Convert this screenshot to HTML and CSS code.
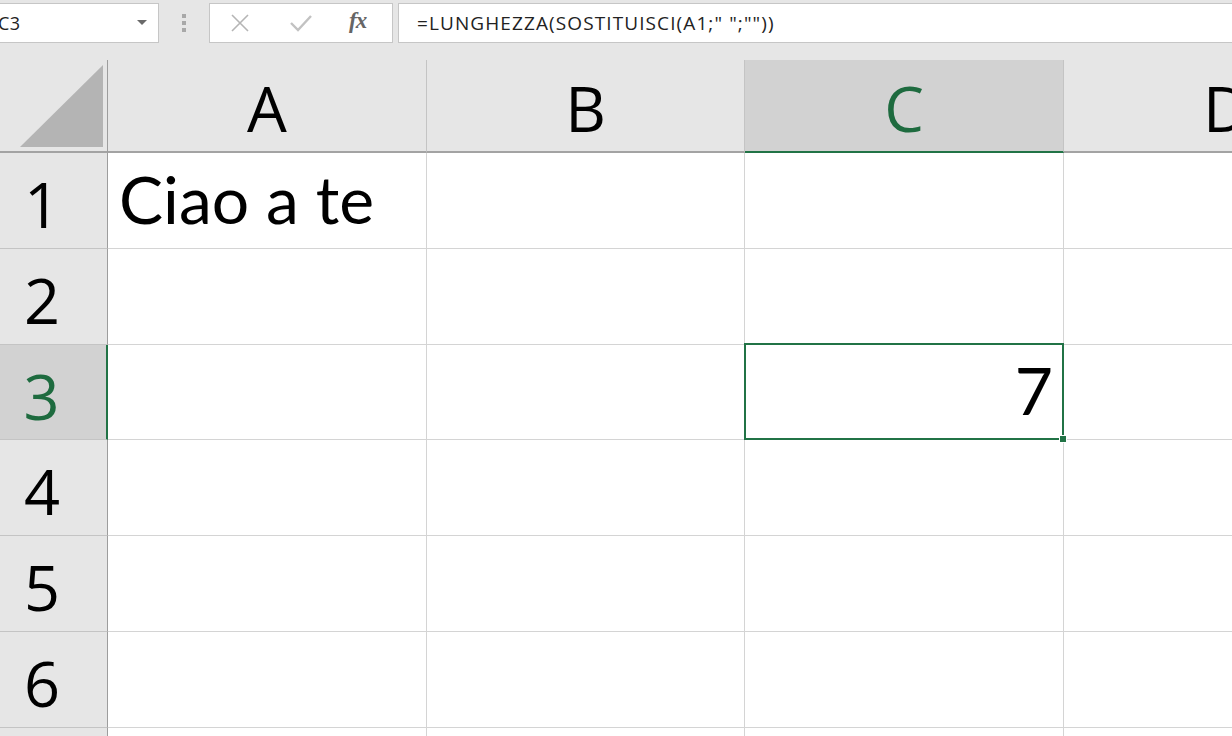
FILE: index.html
```html
<!DOCTYPE html>
<html lang="it">
<head>
<meta charset="utf-8">
<title>Excel</title>
<link rel="stylesheet" href="styles.css">
</head>
<body>
<div class="app">
  <div class="toolbar">
    <div class="namebox">
      <span class="namebox-text">C3</span>
      <svg class="dropdown" width="10" height="6" viewBox="0 0 10 6"><path d="M0 0 H10 L5 5 Z" fill="#6a6a6a"/></svg>
    </div>
    <div class="dots">
      <span class="dot"></span><span class="dot"></span><span class="dot"></span>
    </div>
    <div class="fxbox">
      <svg class="icon" width="20" height="20" viewBox="0 0 20 20"><path d="M2 2 L18 18 M18 2 L2 18" stroke="#b5b5b5" stroke-width="1.6" fill="none"/></svg>
      <svg class="icon" width="24" height="20" viewBox="0 0 24 20"><path d="M2 10 L9 17 L22 3" stroke="#c2c2c2" stroke-width="2.4" fill="none"/></svg>
      <span class="fx">fx</span>
    </div>
    <div class="formula">=LUNGHEZZA(SOSTITUISCI(A1;" ";""))</div>
  </div>

  <div class="sheet">
    <div class="corner"><span class="corner-tri"></span></div>
    <div class="colhead">A</div>
    <div class="colhead">B</div>
    <div class="colhead colhead-active">C</div>
    <div class="colhead colhead-last">D</div>

    <div class="rowhead">1</div>
    <div class="cell cell-text">Ciao a te</div>
    <div class="cell"></div>
    <div class="cell"></div>
    <div class="cell"></div>

    <div class="rowhead">2</div>
    <div class="cell"></div>
    <div class="cell"></div>
    <div class="cell"></div>
    <div class="cell"></div>

    <div class="rowhead rowhead-active">3</div>
    <div class="cell"></div>
    <div class="cell"></div>
    <div class="cell cell-num cell-selected">7<span class="fill-handle"></span></div>
    <div class="cell"></div>

    <div class="rowhead">4</div>
    <div class="cell"></div>
    <div class="cell"></div>
    <div class="cell"></div>
    <div class="cell"></div>

    <div class="rowhead">5</div>
    <div class="cell"></div>
    <div class="cell"></div>
    <div class="cell"></div>
    <div class="cell"></div>

    <div class="rowhead">6</div>
    <div class="cell"></div>
    <div class="cell"></div>
    <div class="cell"></div>
    <div class="cell"></div>

    <div class="rowhead rowhead-clip"></div>
    <div class="cell"></div>
    <div class="cell"></div>
    <div class="cell"></div>
    <div class="cell"></div>
  </div>
</div>
</body>
</html>
```
FILE: styles.css
```css
* { box-sizing: border-box; }
html, body {
  margin: 0;
  padding: 0;
  width: 1232px;
  height: 736px;
  overflow: hidden;
  background: #e6e6e6;
}
.app {
  font-family: "Open Sans", "Noto Sans", sans-serif;
  color: #000;
}
.toolbar {
  height: 60px;
  display: flex;
  align-items: flex-start;
  padding-top: 3px;
  background: #e6e6e6;
}
.namebox {
  width: 159px;
  height: 40px;
  background: #fff;
  border: 1px solid #c6c6c6;
  border-left: none;
  display: flex;
  align-items: center;
  justify-content: space-between;
  padding-right: 11px;
  flex-shrink: 0;
}
.namebox-text {
  font-size: 18px;
  color: #222;
  margin-left: -2px;
  letter-spacing: 0.3px;
}
.dropdown { display: block; }
.dots {
  width: 50px;
  height: 40px;
  display: flex;
  flex-direction: column;
  align-items: center;
  justify-content: center;
  gap: 3px;
  flex-shrink: 0;
}
.dot {
  width: 4px;
  height: 4px;
  background: #a8a8a8;
}
.fxbox {
  width: 184px;
  height: 40px;
  background: #fff;
  border: 1px solid #c6c6c6;
  display: flex;
  align-items: center;
  padding-left: 20px;
  flex-shrink: 0;
}
.fxbox .icon { display: block; }
.fxbox .icon:first-child { margin-right: 39px; }
.fxbox .icon:nth-child(2) { margin-right: 36px; }
.fx {
  font-family: "Liberation Serif", "DejaVu Serif", serif;
  font-style: italic;
  font-weight: bold;
  font-size: 23px;
  color: #666;
  letter-spacing: -1px;
  margin-top: -4px;
}
.formula {
  margin-left: 5px;
  flex: 1;
  height: 40px;
  background: #fff;
  border: 1px solid #c6c6c6;
  border-right: none;
  display: flex;
  align-items: center;
  padding-left: 18px;
  font-size: 19px;
  color: #222;
  white-space: nowrap;
  letter-spacing: 1.1px;
}

.sheet {
  display: grid;
  grid-template-columns: 108px 319px 318px 319px 200px;
  grid-template-rows: 93px 96px 96px 95px 96px 96px 96px 8px;
  background: #fff;
}
.corner {
  background: #e6e6e6;
  border-right: 1px solid #9d9d9d;
  border-bottom: 2px solid #a3a3a3;
  display: flex;
  justify-content: flex-end;
  align-items: flex-end;
  padding: 0 4px 4px 0;
}
.corner-tri {
  width: 83px;
  height: 82px;
  background: #b4b4b4;
  clip-path: polygon(100% 0, 100% 100%, 0 100%);
}
.colhead {
  background: #e6e6e6;
  border-right: 1px solid #c4c4c4;
  border-bottom: 2px solid #a3a3a3;
  display: flex;
  align-items: center;
  justify-content: center;
  font-size: 63px;
  line-height: 1;
  padding-top: 4px;
}
.colhead-last {
  justify-content: flex-start;
  padding-left: 139px;
  border-right: none;
}
.colhead-active {
  background: #d2d2d2;
  color: #1e6b3f;
  border-bottom: 2px solid #217346;
}
.rowhead {
  background: #e6e6e6;
  border-right: 1px solid #9d9d9d;
  border-bottom: 1px solid #c4c4c4;
  display: flex;
  align-items: center;
  justify-content: center;
  padding-right: 23px;
  padding-top: 6px;
  font-size: 63px;
  line-height: 1;
}
.rowhead-clip {
  border-bottom: none;
}
.rowhead-active {
  background: #d2d2d2;
  color: #1e6b3f;
  border-right: 2px solid #217346;
}
.cell {
  border-right: 1px solid #d4d4d4;
  border-bottom: 1px solid #d4d4d4;
  font-family: "Lato", "Open Sans", sans-serif;
  font-size: 66px;
  line-height: 1;
  display: flex;
  align-items: flex-end;
  padding-bottom: 16px;
}
.cell-text {
  padding-left: 11px;
}
.cell-num {
  justify-content: flex-end;
  padding-right: 10px;
}
.cell-selected {
  position: relative;
}
.cell-selected::after {
  content: "";
  position: absolute;
  left: -1px;
  top: -2px;
  right: -1px;
  bottom: -1px;
  border: 2px solid #217346;
  pointer-events: none;
}
.fill-handle {
  position: absolute;
  right: -4px;
  bottom: -4px;
  width: 8px;
  height: 8px;
  background: #217346;
  border: 1px solid #fff;
  z-index: 2;
}
```
